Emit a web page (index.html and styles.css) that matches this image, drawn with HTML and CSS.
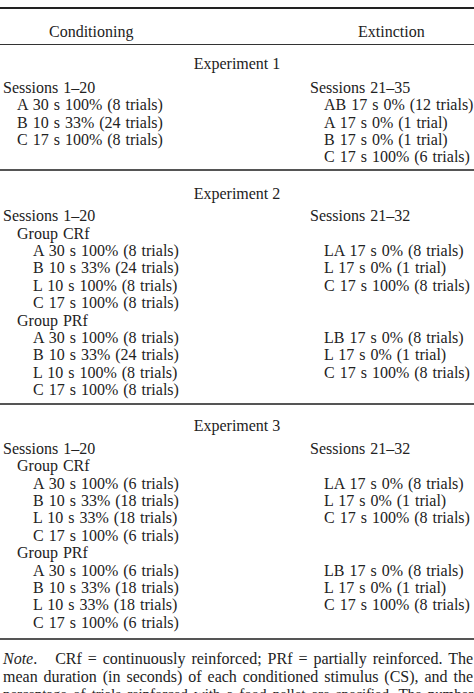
FILE: index.html
```html
<!DOCTYPE html>
<html lang="en">
<head>
<meta charset="utf-8">
<title>Table</title>
<link rel="stylesheet" href="styles.css">
</head>
<body>
<div class="table">
  <div class="head">
    <div class="head-left">Conditioning</div>
    <div class="head-right">Extinction</div>
  </div>

  <section class="exp exp1">
    <div class="exp-title">Experiment 1</div>
    <div class="grid">
      <div>Sessions 1–20</div><div>Sessions 21–35</div>
      <div class="i1">A 30 s 100% (8 trials)</div><div class="i1">AB 17 s 0% (12 trials)</div>
      <div class="i1">B 10 s 33% (24 trials)</div><div class="i1">A 17 s 0% (1 trial)</div>
      <div class="i1">C 17 s 100% (8 trials)</div><div class="i1">B 17 s 0% (1 trial)</div>
      <div></div><div class="i1">C 17 s 100% (6 trials)</div>
    </div>
  </section>

  <section class="exp exp2">
    <div class="exp-title">Experiment 2</div>
    <div class="grid">
      <div>Sessions 1–20</div><div>Sessions 21–32</div>
      <div class="i1">Group CRf</div><div></div>
      <div class="i2">A 30 s 100% (8 trials)</div><div class="i1">LA 17 s 0% (8 trials)</div>
      <div class="i2">B 10 s 33% (24 trials)</div><div class="i1">L 17 s 0% (1 trial)</div>
      <div class="i2">L 10 s 100% (8 trials)</div><div class="i1">C 17 s 100% (8 trials)</div>
      <div class="i2">C 17 s 100% (8 trials)</div><div></div>
      <div class="i1">Group PRf</div><div></div>
      <div class="i2">A 30 s 100% (8 trials)</div><div class="i1">LB 17 s 0% (8 trials)</div>
      <div class="i2">B 10 s 33% (24 trials)</div><div class="i1">L 17 s 0% (1 trial)</div>
      <div class="i2">L 10 s 100% (8 trials)</div><div class="i1">C 17 s 100% (8 trials)</div>
      <div class="i2">C 17 s 100% (8 trials)</div><div></div>
    </div>
  </section>

  <section class="exp exp3">
    <div class="exp-title">Experiment 3</div>
    <div class="grid">
      <div>Sessions 1–20</div><div>Sessions 21–32</div>
      <div class="i1">Group CRf</div><div></div>
      <div class="i2">A 30 s 100% (6 trials)</div><div class="i1">LA 17 s 0% (8 trials)</div>
      <div class="i2">B 10 s 33% (18 trials)</div><div class="i1">L 17 s 0% (1 trial)</div>
      <div class="i2">L 10 s 33% (18 trials)</div><div class="i1">C 17 s 100% (8 trials)</div>
      <div class="i2">C 17 s 100% (6 trials)</div><div></div>
      <div class="i1">Group PRf</div><div></div>
      <div class="i2">A 30 s 100% (6 trials)</div><div class="i1">LB 17 s 0% (8 trials)</div>
      <div class="i2">B 10 s 33% (18 trials)</div><div class="i1">L 17 s 0% (1 trial)</div>
      <div class="i2">L 10 s 33% (18 trials)</div><div class="i1">C 17 s 100% (8 trials)</div>
      <div class="i2">C 17 s 100% (6 trials)</div><div></div>
    </div>
  </section>

  <div class="note">
    <p class="jl"><em>Note</em>.&nbsp;&nbsp; CRf = continuously reinforced; PRf = partially reinforced. The</p>
    <p class="jl">mean duration (in seconds) of each conditioned stimulus (CS), and the</p>
    <p class="jl tight">percentage of trials reinforced with a food pellet are specified. The number</p>
  </div>
</div>
</body>
</html>
```

FILE: styles.css
```css
html, body {
  margin: 0;
  padding: 0;
  background: #ffffff;
}

body {
  font-family: "Liberation Serif", "Times New Roman", serif;
  font-size: 16px;
  line-height: 17.4px;
  color: #222222;
  overflow: hidden;
  height: 693px;
}

.table {
  margin-top: 7px;
  border-top: 2px solid #222222;
}

.head {
  display: flex;
  padding: 14px 0 4px 0;
  border-bottom: 1px solid #333333;
}

.head-left {
  padding-left: 49px;
  width: 309px;
}

.exp {
  border-bottom: 2px solid #555555;
}

.exp1 { padding: 10px 0 3px 0; }
.exp2 { padding: 14px 0 5px 0; }
.exp3 { padding: 12px 0 7px 0; }

.exp1 .exp-title { margin-bottom: 6px; }

.exp-title {
  text-align: center;
  margin-bottom: 5px;
}

.grid {
  display: grid;
  grid-template-columns: 307px 1fr;
  padding-left: 3px;
  white-space: nowrap;
  word-spacing: 1px;
}

.grid > div {
  height: 17.4px;
}

.i1 { padding-left: 14px; }
.i2 { padding-left: 30px; }

.note {
  padding: 10px 1px 0 3px;
}

.jl {
  margin: 0;
  text-align: justify;
  text-align-last: justify;
}

.tight {
  font-size: 15.2px;
  letter-spacing: -0.2px;
  word-spacing: -1px;
  white-space: nowrap;
}
```
